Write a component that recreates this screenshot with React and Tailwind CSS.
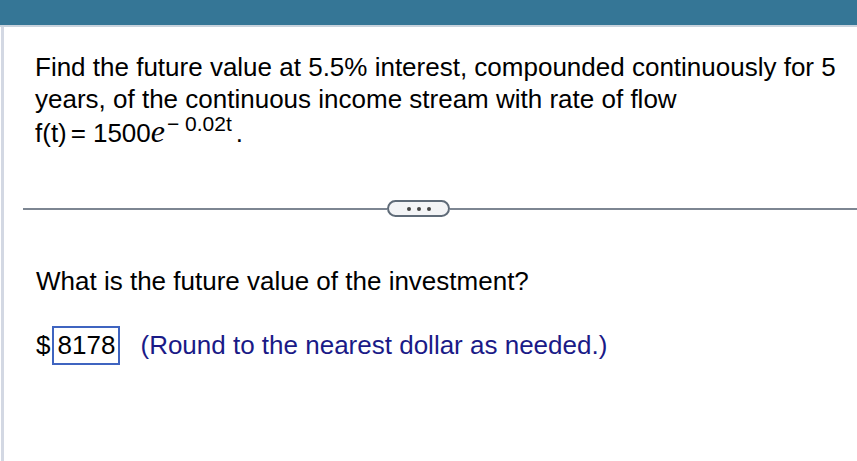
export default function App() {
  return (
    <div className="w-[857px] h-[461px] bg-white overflow-hidden flex flex-col" style={{ fontFamily: '"Liberation Sans", Arial, sans-serif' }}>
      <div className="h-[25px] bg-[#357696] shrink-0"></div>
      <div className="h-[2px] bg-[#c9d3dd] shrink-0"></div>
      <div className="flex flex-1">
        <div className="w-[3px] ml-[1px] bg-[#d3d8e3] shrink-0"></div>
        <div className="flex-1 flex flex-col">
          <div className="pl-[31px] pt-[24px] text-[26px] leading-[32px] text-black">
            <p>Find the future value at 5.5% interest, compounded continuously for 5</p>
            <p>years, of the continuous income stream with rate of flow</p>
            <p className="whitespace-nowrap">
              f(t)<span className="ml-[4px] mr-[7px]">=</span>1500
              <span style={{ fontFamily: '"Liberation Serif", serif' }} className="italic text-[32px] leading-none">e</span>
              <span className="text-[21px] leading-none relative top-[-11px] ml-[2px]">&minus; 0.02t</span>
              <span className="ml-[4px]">.</span>
            </p>
          </div>
          <div className="mt-[51px] ml-[19px] flex items-center">
            <div className="flex-1 h-[2px] bg-[#7d8692]"></div>
            <div className="w-[63px] h-[17px] rounded-full border-2 border-[#5f6b78] bg-[#f3f4f6] flex items-center justify-center gap-[6px]">
              <span className="w-[4px] h-[4px] rounded-full bg-[#444]"></span>
              <span className="w-[4px] h-[4px] rounded-full bg-[#444]"></span>
              <span className="w-[4px] h-[4px] rounded-full bg-[#444]"></span>
            </div>
            <div className="w-[407px] h-[2px] bg-[#7d8692]"></div>
          </div>
          <p className="pl-[32px] mt-[49px] text-[26px] leading-[30px] text-black">What is the future value of the investment?</p>
          <div className="pl-[32px] mt-[30px] flex items-center text-[26px]">
            <span className="text-black">$</span>
            <span className="ml-[2px] w-[68px] h-[39px] border-2 border-[#3f64c0] flex items-center justify-center text-black">8178</span>
            <span className="ml-[20px] text-[#1a1a87]">(Round to the nearest dollar as needed.)</span>
          </div>
        </div>
      </div>
    </div>
  );
}
